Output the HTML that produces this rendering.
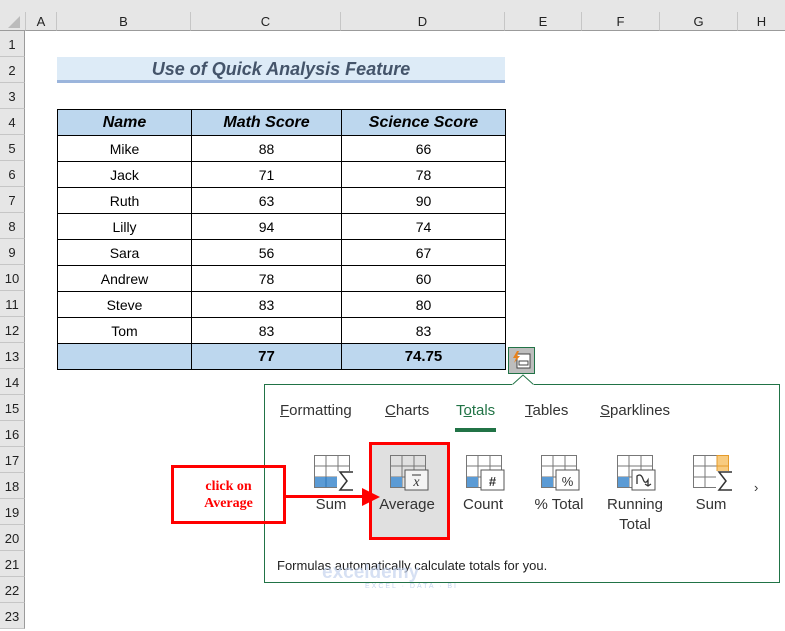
<!DOCTYPE html>
<html><head><style>
*{margin:0;padding:0;box-sizing:border-box}
body{width:785px;height:610px;overflow:hidden;background:#fff;font-family:"Liberation Sans",sans-serif;position:relative}
.a{position:absolute}
.ch{position:absolute;top:12px;height:19px;background:#e6e6e6;border-right:1px solid #c6c6c6;border-bottom:1px solid #9b9b9b;font-size:13px;color:#222;text-align:center;line-height:19px}
.rh{position:absolute;left:0;width:25px;height:26px;background:#e6e6e6;border-bottom:1px solid #c6c6c6;border-right:1px solid #9b9b9b;font-size:13px;color:#222;text-align:center;line-height:28px}
table{position:absolute;left:57px;top:109px;border-collapse:collapse;font-family:"Liberation Sans",sans-serif}
td{border:1px solid #000;height:26px;text-align:center;font-size:14px;padding:0}
.hd td{background:#bdd7ee;font-weight:bold;font-style:italic;font-size:16px}
.tot td{background:#bdd7ee;font-weight:bold;font-size:15px}
.tab{position:absolute;top:402px;font-size:15px;color:#333}
.lbl{position:absolute;font-size:15px;color:#333;text-align:center;width:80px;line-height:20px}
</style></head><body>
<div class="a" style="left:0;top:0;width:785px;height:12px;background:#e6e6e6"></div>
<div class="ch" style="left:0;width:26px"><svg width="20" height="19"><polygon points="17,4 17,16 5,16" fill="#bbb"/></svg></div>
<div class="ch" style="left:26px;width:31px">A</div>
<div class="ch" style="left:57px;width:134px">B</div>
<div class="ch" style="left:191px;width:150px">C</div>
<div class="ch" style="left:341px;width:164px">D</div>
<div class="ch" style="left:505px;width:77px">E</div>
<div class="ch" style="left:582px;width:78px">F</div>
<div class="ch" style="left:660px;width:78px">G</div>
<div class="ch" style="left:738px;width:47px;border-right:none">H</div>
<div class="rh" style="top:31px">1</div><div class="rh" style="top:57px">2</div><div class="rh" style="top:83px">3</div><div class="rh" style="top:109px">4</div><div class="rh" style="top:135px">5</div><div class="rh" style="top:161px">6</div><div class="rh" style="top:187px">7</div><div class="rh" style="top:213px">8</div><div class="rh" style="top:239px">9</div><div class="rh" style="top:265px">10</div><div class="rh" style="top:291px">11</div><div class="rh" style="top:317px">12</div><div class="rh" style="top:343px">13</div><div class="rh" style="top:369px">14</div><div class="rh" style="top:395px">15</div><div class="rh" style="top:421px">16</div><div class="rh" style="top:447px">17</div><div class="rh" style="top:473px">18</div><div class="rh" style="top:499px">19</div><div class="rh" style="top:525px">20</div><div class="rh" style="top:551px">21</div><div class="rh" style="top:577px">22</div><div class="rh" style="top:603px">23</div>

<div class="a" style="left:57px;top:57px;width:448px;height:26px;background:#ddebf7;border-bottom:3px solid #9bb5dc;text-align:center;font-weight:bold;font-style:italic;font-size:18px;color:#44546a;line-height:25px">Use of Quick Analysis Feature</div>

<table>
<tr class="hd"><td style="width:134px">Name</td><td style="width:150px">Math Score</td><td style="width:164px">Science Score</td></tr>
<tr><td>Mike</td><td>88</td><td>66</td></tr>
<tr><td>Jack</td><td>71</td><td>78</td></tr>
<tr><td>Ruth</td><td>63</td><td>90</td></tr>
<tr><td>Lilly</td><td>94</td><td>74</td></tr>
<tr><td>Sara</td><td>56</td><td>67</td></tr>
<tr><td>Andrew</td><td>78</td><td>60</td></tr>
<tr><td>Steve</td><td>83</td><td>80</td></tr>
<tr><td>Tom</td><td>83</td><td>83</td></tr>
<tr class="tot"><td></td><td>77</td><td>74.75</td></tr>
</table>

<div class="a" style="left:508px;top:347px;width:27px;height:27px;background:#bdbdbd;border:1px solid #217346">
<svg width="25" height="25"><rect x="8" y="6" width="13" height="14" fill="#fff" stroke="#444"/><rect x="10" y="13" width="9" height="4" fill="none" stroke="#444"/><path d="M8 3 L4 10 L7 10 L5 15 L11 8 L8 8 L10 3Z" fill="#e8821c"/></svg></div>

<div class="a" style="left:264px;top:384px;width:516px;height:199px;border:1px solid #217346;background:#fff"></div>
<svg class="a" style="left:512px;top:374px" width="22" height="12"><polygon points="0,11 11,1 22,11" fill="#fff" stroke="#217346"/><rect x="0" y="10.5" width="22" height="2" fill="#fff"/></svg>

<div class="tab" style="left:280px"><u>F</u>ormatting</div>
<div class="tab" style="left:385px"><u>C</u>harts</div>
<div class="tab" style="left:456px;color:#217346">T<u>o</u>tals</div>
<div class="tab" style="left:525px"><u>T</u>ables</div>
<div class="tab" style="left:600px"><u>S</u>parklines</div>
<div class="a" style="left:455px;top:428px;width:41px;height:4px;background:#217346"></div>

<div class="a" style="left:371px;top:444px;width:78px;height:94px;background:#e0e0e0"></div>

<svg class="a" style="left:314px;top:455px" width="440" height="40" font-family="Liberation Serif">
<defs>
<g id="g"><path d="M0.5 0.5H35.5V32.5H0.5Z M12 0.5V32.5 M24 0.5V32.5 M0.5 11H35.5 M0.5 22H35.5" fill="none" stroke="#777"/></g>
</defs>
<!-- sum -->
<use href="#g"/><rect x="1" y="22" width="22" height="10" fill="#5b9bd5"/><path d="M12 22V32" stroke="#2e75b6"/>
<rect x="23" y="16" width="18" height="20" fill="#fff"/><path d="M39 17H26L33 26L26 35H39" fill="none" stroke="#333" stroke-width="1.5"/>
<!-- average -->
<g transform="translate(76,0)"><use href="#g"/><rect x="1" y="22" width="11" height="10" fill="#5b9bd5"/><rect x="15" y="15" width="23" height="20" fill="#f4f4f4" stroke="#555"/><text x="26.5" y="31" font-size="14" font-style="italic" text-anchor="middle" fill="#333">x</text><path d="M22 20H31" stroke="#333"/></g>
<!-- count -->
<g transform="translate(152,0)"><use href="#g"/><rect x="1" y="22" width="11" height="10" fill="#5b9bd5"/><rect x="15" y="15" width="23" height="20" fill="#fff" stroke="#555"/><text x="26.5" y="31" font-size="13" font-weight="bold" text-anchor="middle" fill="#333" font-family="Liberation Sans">#</text></g>
<!-- % -->
<g transform="translate(227,0)"><use href="#g"/><rect x="1" y="22" width="11" height="10" fill="#5b9bd5"/><rect x="15" y="15" width="23" height="20" fill="#fff" stroke="#555"/><text x="26.5" y="31" font-size="13" text-anchor="middle" fill="#333" font-family="Liberation Sans">%</text></g>
<!-- running -->
<g transform="translate(303,0)"><use href="#g"/><rect x="1" y="22" width="11" height="10" fill="#5b9bd5"/><rect x="15" y="15" width="23" height="20" fill="#fff" stroke="#555"/><path d="M20 29V21Q24 18 26 24Q28 30 31 25V31M28 29L31 31L34 29" fill="none" stroke="#333" stroke-width="1.3"/></g>
<!-- sum col -->
<g transform="translate(379,0)"><use href="#g"/><rect x="24" y="1" width="11" height="21" fill="#f8cb7f"/><path d="M24 0.5H35.5V22H24Z M24 11H35.5" fill="none" stroke="#e59b2b"/><rect x="23" y="16" width="18" height="20" fill="#fff"/><path d="M39 17H26L33 26L26 35H39" fill="none" stroke="#333" stroke-width="1.5"/></g>
</svg>

<div class="lbl" style="left:291px;top:495px">Sum</div>
<div class="lbl" style="left:367px;top:495px">Average</div>
<div class="lbl" style="left:443px;top:495px">Count</div>
<div class="lbl" style="left:519px;top:495px">% Total</div>
<div class="lbl" style="left:595px;top:495px">Running<br>Total</div>
<div class="lbl" style="left:671px;top:495px">Sum</div>
<div class="a" style="left:754px;top:480px;font-size:13px;color:#333">›</div>

<div class="a" style="left:369px;top:442px;width:81px;height:98px;border:3px solid #ff0000"></div>

<div class="a" style="left:171px;top:465px;width:115px;height:59px;border:3px solid #ff0000;color:#ff0000;font-family:'Liberation Serif',serif;font-weight:bold;font-size:14px;text-align:center;line-height:17px;padding-top:10px">click on<br>Average</div>
<div class="a" style="left:285px;top:495px;width:80px;height:3px;background:#ff0000"></div>
<svg class="a" style="left:362px;top:488px" width="18" height="18"><polygon points="0,0 18,9 0,18" fill="#ff0000"/></svg>

<div class="a" style="left:277px;top:558px;font-size:13px;color:#222">Formulas automatically calculate totals for you.</div>
<div class="a" style="left:322px;top:562px;font-size:19px;font-weight:bold;color:#c5d4ee;opacity:.7">exceldemy</div>
<div class="a" style="left:365px;top:583px;font-size:7px;color:#c5d4ee;letter-spacing:2px">EXCEL · DATA · BI</div>
</body></html>
